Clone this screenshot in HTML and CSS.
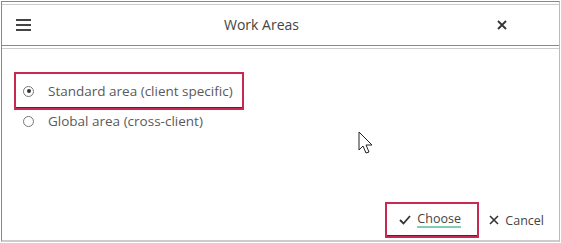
FILE: index.html
```html
<!DOCTYPE html>
<html>
<head>
<meta charset="utf-8">
<link rel="stylesheet" href="styles.css">
</head>
<body>
<div class="frame">
  <div class="dialog">
    <header class="head">
      <span class="menu"><i></i><i></i><i></i></span>
      <span class="title">Work Areas</span>
      <svg class="close" width="10" height="10" viewBox="0 0 10 10"><path d="M1 1 L9 9 M9 1 L1 9" stroke="#333" stroke-width="1.8"/></svg>
    </header>
    <main class="body">
      <div class="options">
        <label class="opt sel"><span class="radio on"></span>Standard area (client specific)</label>
        <label class="opt"><span class="radio"></span>Global area (cross-client)</label>
      </div>
      <svg class="cursor" width="16" height="24" viewBox="0 0 16 24"><path d="M1 1 L1 19 L5 15 L8 22 L11 21 L8 14 L14 14 Z" fill="#fff" stroke="#222" stroke-width="1"/></svg>
    </main>
    <footer class="foot">
      <button class="btn choose"><svg width="12" height="10" viewBox="0 0 12 10"><path d="M1 5 L4.5 8.5 L11 1" fill="none" stroke="#333" stroke-width="1.8"/></svg><span class="lbl">Choose</span></button>
      <button class="btn cancel"><svg width="10" height="10" viewBox="0 0 10 10"><path d="M1 1 L9 9 M9 1 L1 9" stroke="#333" stroke-width="1.6"/></svg><span>Cancel</span></button>
    </footer>
  </div>
</div>
</body>
</html>
```
FILE: styles.css
```css
html, body { margin: 0; padding: 0; background: #fff; }
body { width: 561px; height: 243px; overflow: hidden; font-family: "Open Sans", "Liberation Sans", sans-serif; color: #444; }
.frame { box-sizing: border-box; width: 561px; height: 243px; padding: 1px 1px 1px 1px; }
.dialog { box-sizing: border-box; height: 241px; border-left: 1px solid #888; border-top: 1px solid #888; border-right: 1px solid #bbb; border-bottom: 2px solid #ccc; display: flex; flex-direction: column; position: relative; }
.head { box-sizing: border-box; height: 42px; margin-top: 2px; border-top: 1px solid #ccc; border-bottom: 1px solid #888; display: flex; align-items: center; padding: 0 14px 0 14px; position: relative; }
.menu { display: flex; flex-direction: column; gap: 3px; width: 15px; }
.menu i { display: block; height: 2px; background: #444; }
.title { flex: 1; text-align: center; font-size: 14px; color: #444; margin-left: -5px; margin-top: -1px; }
.close { margin-right: 38px; }
.body { flex: 1; border-top: 1px solid #ccc; margin-top: 2px; position: relative; padding: 23px 0 0 12px; }
.options { display: flex; flex-direction: column; gap: 7px; }
.opt { display: flex; align-items: center; gap: 14px; font-size: 13.5px; color: #5a5a5a; padding: 0 0 0 7px; height: 22px; }
.opt.sel { width: 219px; height: 34px; border: 2px solid #c72a50; box-shadow: inset 0 -1px 0 #333; }
.opt:not(.sel) { margin-top: -7px; margin-left: 2px; }
.radio { width: 11px; height: 11px; border: 1px solid #777; border-radius: 50%; box-sizing: border-box; position: relative; flex: none; }
.radio.on::after { content: ""; position: absolute; left: 2.5px; top: 2.5px; width: 4px; height: 4px; border-radius: 50%; background: #333; }
.cursor { position: absolute; left: 356px; top: 82px; }
.foot { height: 40px; display: flex; align-items: center; justify-content: flex-end; padding-right: 11px; gap: 4px; padding-top: 2px; }
.btn { font-family: inherit; font-size: 12.5px; color: #444; background: #fff; display: flex; align-items: center; gap: 6px; height: 36px; box-sizing: border-box; cursor: default; }
.choose { border: 2px solid #c72a50; padding: 0 16px 0 12px; box-shadow: inset 0 -1px 0 #333; width: 94px; margin-right: 2px; }
.choose .lbl { border-bottom: 2px solid #7fcfb0; line-height: 14px; }
.cancel { border: none; padding: 0 4px; }
```
